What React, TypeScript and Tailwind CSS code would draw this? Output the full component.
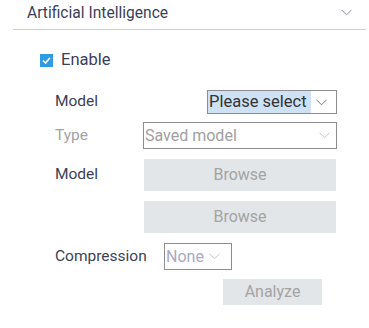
import React from "react";

const Chevron = ({ className = "" }: { className?: string }) => (
  <svg width="11" height="7" viewBox="0 0 11 7" className={className} fill="none">
    <path d="M0.5 0.8 L5.5 5.8 L10.5 0.8" stroke="currentColor" strokeWidth="1" />
  </svg>
);

export default function App() {
  return (
    <div
      className="w-[369px] h-[328px] bg-white text-[#3b3f58] overflow-hidden"
      style={{ fontFamily: "Roboto, 'Liberation Sans', Arial, sans-serif" }}
    >
      <div className="ml-[13px] mr-[3px] h-[30px] border-b border-[#c6ced6] flex items-center justify-between pl-[14px] pr-[14px]">
        <span className="text-[15.6px] leading-none mt-[-1px]">Artificial Intelligence</span>
        <Chevron className="text-[#8a8f98] mt-[-5px]" />
      </div>

      <div className="pl-[40px] mt-[23px] flex items-center gap-[8px] h-[14px]">
        <span className="w-[13px] h-[13px] bg-[#2f9be0] flex items-center justify-center">
          <svg width="11" height="11" viewBox="0 0 11 11" fill="none">
            <path d="M2 5.5 L4.5 8 L9 2.8" stroke="white" strokeWidth="1.6" />
          </svg>
        </span>
        <span className="text-[16.5px] leading-none">Enable</span>
      </div>

      <div className="pl-[55px] pr-[32px] mt-[23px] flex flex-col">
        <div className="flex items-center justify-between h-[24px]">
          <span className="text-[15.5px]">Model</span>
          <div className="w-[130px] h-[24px] border border-[#8d8d8d] flex items-center">
            <span className="h-[22px] bg-[#cfe2f5] text-[16.5px] text-[#333] leading-[22px] pl-[1px] pr-[4px]">Please select</span>
            <Chevron className="text-[#777] ml-[5px]" />
          </div>
        </div>

        <div className="flex items-center h-[27px] mt-[8px]">
          <span className="text-[15.5px] text-[#a3a3a3] w-[88px]">Type</span>
          <div className="w-[194px] h-[27px] border border-[#8d8d8d] flex items-center justify-between pl-[1px] pr-[6px]">
            <span className="text-[16px] text-[#a0a0a0]">Saved model</span>
            <Chevron className="text-[#c4c4c4]" />
          </div>
        </div>

        <div className="flex items-center h-[32px] mt-[10px]">
          <span className="text-[15.5px] w-[89px]">Model</span>
          <div className="w-[192px] h-[32px] bg-[#e3e6e9] flex items-center justify-center text-[16px] text-[#a3a3a3]">Browse</div>
        </div>

        <div className="flex items-center h-[32px] mt-[10px]">
          <span className="w-[89px]"></span>
          <div className="w-[192px] h-[32px] bg-[#e3e6e9] flex items-center justify-center text-[16px] text-[#a3a3a3]">Browse</div>
        </div>

        <div className="flex items-center h-[27px] mt-[10px]">
          <span className="text-[15.5px] w-[109px]">Compression</span>
          <div className="w-[68px] h-[27px] border border-[#8d8d8d] flex items-center pl-[1px]">
            <span className="text-[16px] text-[#a9a9c0]">None</span>
            <Chevron className="text-[#c4c4c4] ml-[5px]" />
          </div>
        </div>

        <div className="flex mt-[9px] pl-[168px]">
          <div className="w-[99px] h-[26px] bg-[#e3e6e9] flex items-center justify-center text-[16px] text-[#a3a3a3]">Analyze</div>
        </div>
      </div>
    </div>
  );
}
